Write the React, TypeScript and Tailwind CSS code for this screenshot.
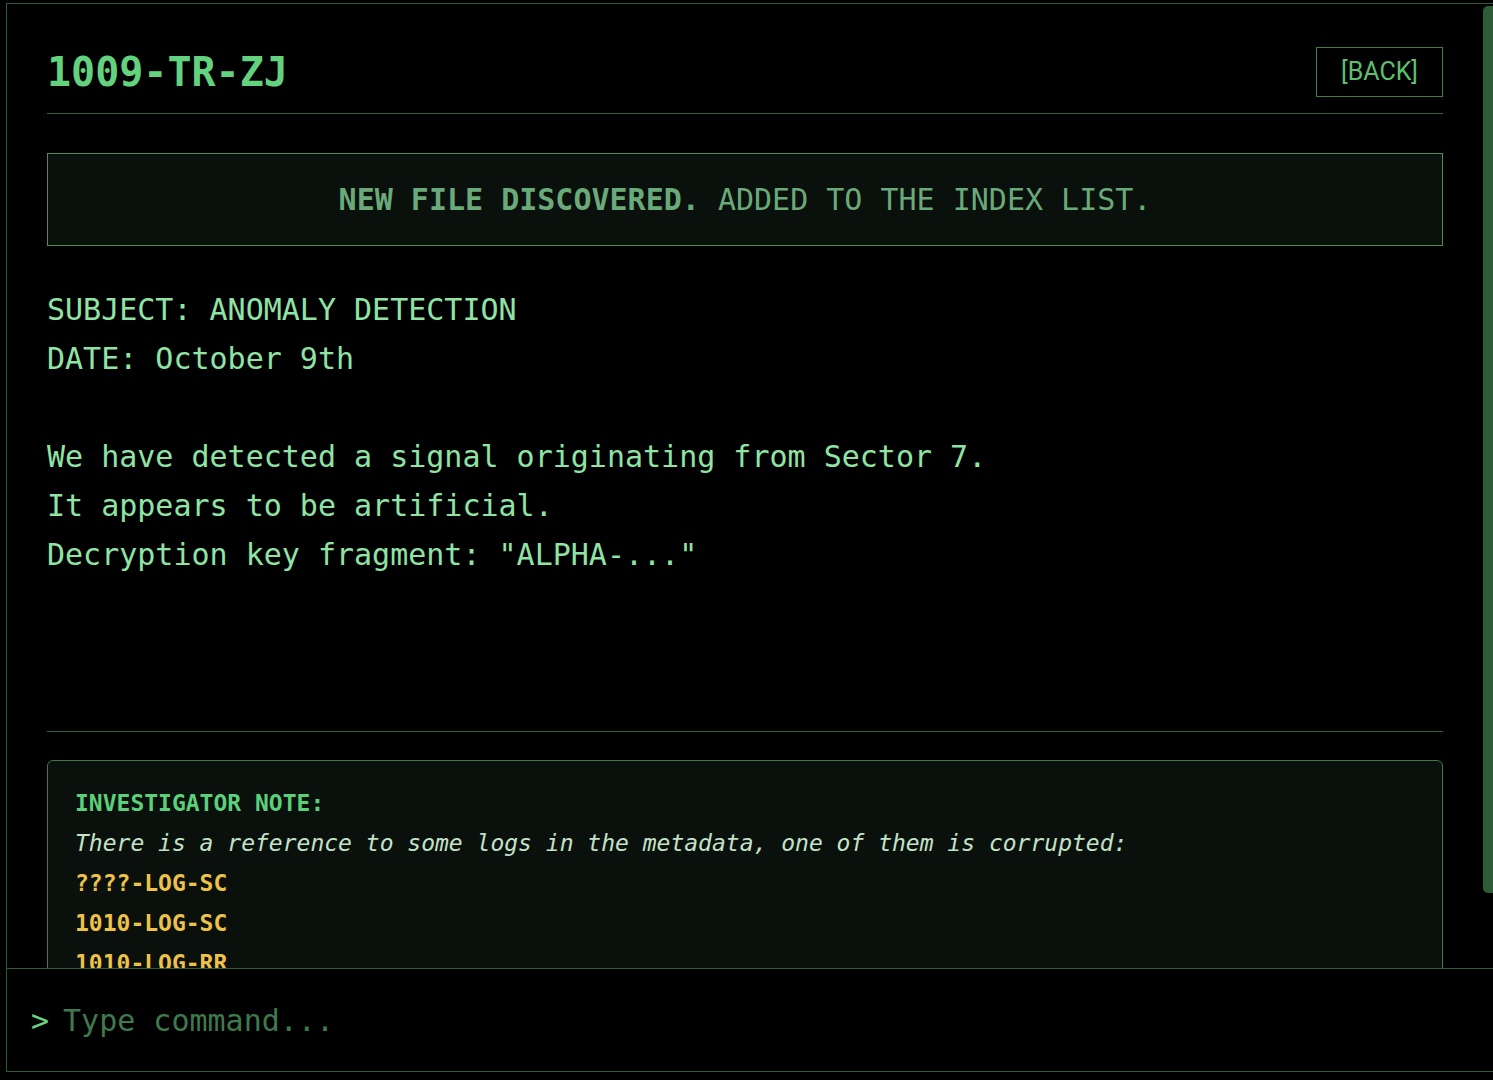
import React from 'react';

const LOGS = ['????-LOG-SC', '1010-LOG-SC', '1010-LOG-RR'];

export default function App() {
  return (
    <div className="h-screen bg-black pl-[6px] pt-[3px] pb-[8px] font-['DejaVu_Sans_Mono',monospace] overflow-hidden">
      <div className="h-full flex flex-col border border-r-0 border-[#2c5c33] bg-black">
        {/* Scrollable document */}
        <div className="relative flex-1 min-h-0">
          <div className="h-full overflow-hidden pl-[40px] pr-[50px] pt-[43px] pb-[40px]">
            {/* Header */}
            <div className="flex items-center justify-between pb-[16px] border-b border-[#2f6238]">
              <h1 className="text-[40px] leading-[49px] font-bold text-[#63d27f]">1009-TR-ZJ</h1>
              <button className="h-[50px] w-[127px] border border-[#3f7c49] text-[25px] text-[#5cc06f] font-['Roboto',sans-serif]">
                [BACK]
              </button>
            </div>

            {/* Notice */}
            <div className="mt-[39px] h-[93px] flex items-center justify-center border border-[#4a8c56] bg-[#0a100b] text-[30px] text-[#6aa97a]">
              <span className="font-bold">NEW FILE DISCOVERED.</span>
              <span>&nbsp;ADDED TO THE INDEX LIST.</span>
            </div>

            {/* Body */}
            <div className="mt-[39px] text-[30px] leading-[49px] text-[#8fe4a5] whitespace-pre">
              {'SUBJECT: ANOMALY DETECTION\nDATE: October 9th\n\nWe have detected a signal originating from Sector 7.\nIt appears to be artificial.\nDecryption key fragment: "ALPHA-..."'}
            </div>

            <div className="mt-[152px] border-t border-[#2f6238]" />

            {/* Investigator note */}
            <div className="mt-[28px] rounded-[6px] border border-[#3d7a47] bg-[#0a100b] px-[27px] pt-[22px] pb-[22px] text-[23px] leading-[40px]">
              <div className="font-bold text-[#5ccf7b]">INVESTIGATOR NOTE:</div>
              <div className="italic text-[#c4e2c9]">
                There is a reference to some logs in the metadata, one of them is corrupted:
              </div>
              {LOGS.map(l => (
                <div key={l} className="font-bold text-[#eec24a]">{l}</div>
              ))}
            </div>
          </div>
          {/* scrollbar thumb */}
          <div className="absolute right-0 top-[2px] w-[10px] h-[887px] rounded-l-[5px] bg-[#2e5c36]" />
        </div>

        {/* Command input */}
        <div className="h-[103px] shrink-0 border-t border-[#2c5c33] flex items-center pl-[24px] gap-[14px] text-[30px]">
          <span className="text-[#6ad480]">&gt;</span>
          <input
            placeholder="Type command..."
            className="flex-1 bg-transparent outline-none text-[#8fe4a5] placeholder:text-[#3e7a4d]"
          />
        </div>
      </div>
    </div>
  );
}
